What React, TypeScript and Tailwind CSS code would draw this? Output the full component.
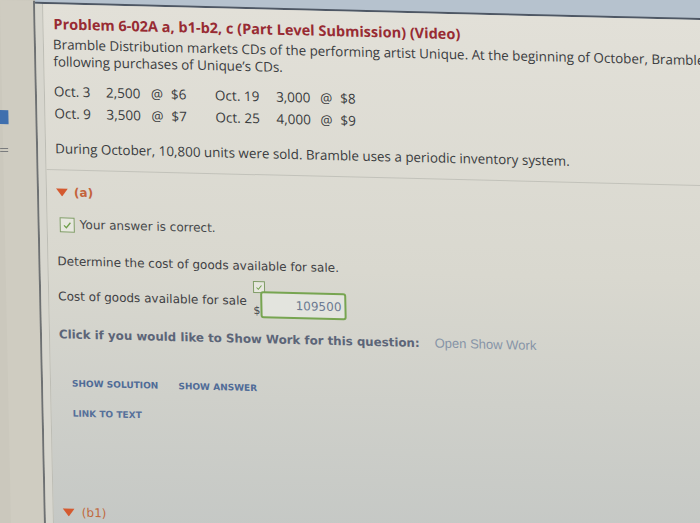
import React from 'react'

const sans = "font-['Open_Sans',sans-serif]"
const verdana = "font-['DejaVu_Sans',sans-serif]"

function Tick({ size }: { size: 'sm' | 'md' }) {
  const box = size === 'md' ? 'h-[15px] w-[15px]' : 'h-[12px] w-[12px]'
  return (
    <span
      className={`flex shrink-0 items-center justify-center border border-[#7f9c66] bg-[#e7e7df] ${box}`}
    >
      <svg viewBox="0 0 14 14" className="h-full w-full">
        <path d="M3.5 7.5 L6 10 L10.5 4.5" fill="none" stroke="#6f9f4a" strokeWidth="1.4" />
      </svg>
    </span>
  )
}

function Caret() {
  return (
    <svg viewBox="0 0 12 8" className="h-[8px] w-[12px] shrink-0">
      <polygon points="0,0 12,0 6,8" fill="#d45a30" />
    </svg>
  )
}

const purchases = [
  ['Oct. 3', '2,500', '$6', 'Oct. 19', '3,000', '$8'],
  ['Oct. 9', '3,500', '$7', 'Oct. 25', '4,000', '$9'],
]

export default function App() {
  return (
    <div className="relative h-[523px] w-[700px] overflow-hidden bg-[#cbc8bd]">
      {/* whole screen is photographed a little off-axis */}
      <div className="flex h-[523px] w-[760px] origin-top-left skew-x-[1.2deg] skew-y-[1.4deg]">
        {/* left rail */}
        <div className="flex w-[33px] shrink-0 flex-col bg-[#cfccc1] pt-[110px]">
          <div className="-ml-[3px] h-[14px] w-[9px] bg-[#3f6fae]" />
          <div className="-ml-[3px] mt-[24px] h-px w-[8px] bg-[#7a7c7e]" />
          <div className="-ml-[3px] mt-[2px] h-px w-[8px] bg-[#7a7c7e]" />
        </div>
        <div className="w-[2px] shrink-0 bg-[#6e7173]" />

        <div className="flex flex-1 flex-col">
          <div className="-mt-[30px] h-[33px] shrink-0 border-b-2 border-[#4e5764] bg-[#b6c2ce]" />
          <div className="flex flex-1">
            <div className="w-[8px] shrink-0 border-r border-[#bdbdb5] bg-[#d7d6ce]" />

            <div className="flex flex-1 flex-col bg-linear-to-b from-[#e2e0d8] via-[#d9d8cf] to-[#c5c8c5]">
              {/* question */}
              <div className="border-b border-[#c2c2ba] pb-[12px] pl-[9px] pt-[10px]">
                <div className={`${sans} ml-px text-[14.5px] font-bold leading-[19px] text-[#982b33]`}>
                  Problem 6-02A a, b1-b2, c (Part Level Submission) (Video)
                </div>
                <div className={`${sans} mt-[3px] text-[13.4px] leading-[17px] text-[#3a3c40]`}>
                  <div className="whitespace-nowrap">
                    Bramble Distribution markets CDs of the performing artist Unique. At the beginning of
                    October, Bramble had in beginning inventory 2,000 of Unique’s CDs with a unit cost of
                    $5. During October, Bramble made the
                  </div>
                  <div>following purchases of Unique’s CDs.</div>
                </div>

                <div
                  className={`${sans} mt-[10px] grid grid-cols-[52px_45px_20px_44px_61px_44px_20px_auto] text-[13.5px] leading-[22px] text-[#3a3c40]`}
                >
                  {purchases.map((r) => (
                    <React.Fragment key={r[0]}>
                      <span>{r[0]}</span>
                      <span>{r[1]}</span>
                      <span>@</span>
                      <span>{r[2]}</span>
                      <span>{r[3]}</span>
                      <span>{r[4]}</span>
                      <span>@</span>
                      <span>{r[5]}</span>
                    </React.Fragment>
                  ))}
                </div>

                <div className={`${sans} mt-[16px] text-[13.4px] leading-[17px] text-[#3a3c40]`}>
                  During October, 10,800 units were sold. Bramble uses a periodic inventory system.
                </div>
              </div>

              {/* part (a) */}
              <div className={`${verdana} flex flex-col pl-[9px] pt-[13px]`}>
                <div className="flex h-[18px] items-center gap-[6px]">
                  <Caret />
                  <span className="text-[12px] font-bold text-[#c4643c]">(a)</span>
                </div>

                <div className="ml-[3px] mt-[15px] flex h-[16px] items-center gap-[5px] text-[12px] text-[#45474a]">
                  <Tick size="md" />
                  <span>Your answer is correct.</span>
                </div>

                <div className="mt-[21px] text-[12px] leading-[16px] text-[#3f4144]">
                  Determine the cost of goods available for sale.
                </div>

                <div className="mt-[7px] flex items-start">
                  <div className="mt-[12px] w-[195px] text-[12px] leading-[16px] text-[#3f4144]">
                    Cost of goods available for sale
                  </div>
                  <div className="flex flex-col">
                    <Tick size="sm" />
                    <div className="-mt-[2px] flex items-end">
                      <span className="w-[7px] text-[11px] leading-[14px] text-[#4a4c50]">$</span>
                      <div className="flex h-[27px] w-[86px] items-center justify-end rounded-[3px] border-2 border-[#77a551] bg-[#e3e4de] pr-[3px] text-[12px] text-[#6c7a91]">
                        109500
                      </div>
                    </div>
                  </div>
                </div>

                <div className="mt-[12px] flex items-baseline leading-[18px]">
                  <span className="text-[11.8px] font-bold text-[#5c6578]">
                    Click if you would like to Show Work for this question:
                  </span>
                  <span className="ml-[15px] font-['Liberation_Sans',sans-serif] text-[13px] text-[#8794a7]">
                    Open Show Work
                  </span>
                </div>

                <div className="ml-[12px] mt-[34px] flex gap-[20px] text-[9px] font-bold uppercase leading-[12px] text-[#4f6b97]">
                  <span>Show Solution</span>
                  <span>Show Answer</span>
                </div>
                <div className="ml-[12px] mt-[18px] text-[9px] font-bold uppercase leading-[12px] text-[#56709a]">
                  Link to Text
                </div>

                <div className="mt-[84px] flex h-[18px] items-center gap-[7px]">
                  <Caret />
                  <span className="text-[12px] text-[#c06a40]">(b1)</span>
                </div>
              </div>
            </div>
          </div>
        </div>
      </div>
    </div>
  )
}
